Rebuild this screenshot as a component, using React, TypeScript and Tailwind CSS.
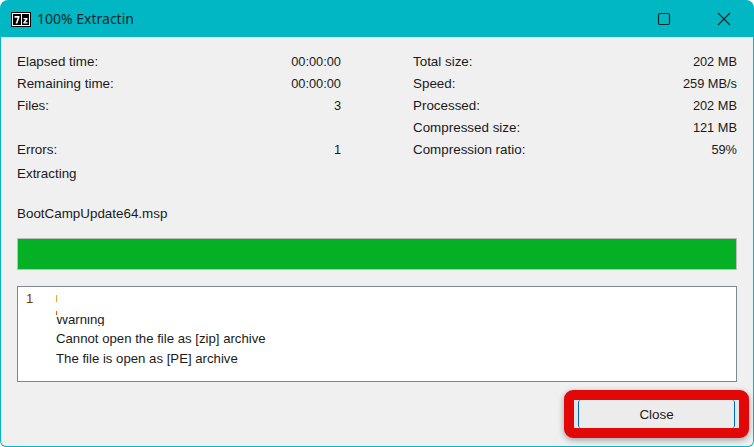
const leftRows = [
  { label: "Elapsed time:", value: "00:00:00" },
  { label: "Remaining time:", value: "00:00:00" },
  { label: "Files:", value: "3" },
  { label: "", value: "" },
  { label: "Errors:", value: "1" },
];

const rightRows = [
  { label: "Total size:", value: "202 MB" },
  { label: "Speed:", value: "259 MB/s" },
  { label: "Processed:", value: "202 MB" },
  { label: "Compressed size:", value: "121 MB" },
  { label: "Compression ratio:", value: "59%" },
];

function StatColumn({ rows }: { rows: { label: string; value: string }[] }) {
  return (
    <div className="w-[324px] flex flex-col">
      {rows.map((row, i) => (
        <div key={i} className="h-[22px] flex items-center justify-between">
          <span>{row.label}</span>
          <span className="text-[12.8px]">{row.value}</span>
        </div>
      ))}
    </div>
  );
}

function SevenZipLogo() {
  return (
    <svg width="20" height="15" viewBox="0 0 20 15" className="shrink-0">
      <rect x="0.5" y="0.5" width="19" height="14" fill="#fff" stroke="#000" />
      <rect x="2" y="2" width="8" height="11" fill="#000" />
      <rect x="11" y="2" width="7" height="11" fill="#000" />
      <path d="M3.5 4h5v1.6L6.3 11.5H4.6L6.6 5.7H3.5z" fill="#fff" />
      <path d="M12.5 6h4v1.3l-2.3 3h2.4v1.2h-4.3v-1.2l2.4-3h-2.2z" fill="#fff" />
    </svg>
  );
}

export default function App() {
  return (
    <div className="w-[754px] h-[447px] bg-white overflow-hidden text-[13.4px] leading-none text-[#1a1a1a] font-['Liberation_Sans',sans-serif]">
      <div className="w-full h-full flex flex-col bg-[#00b7c3] rounded-t-[8px] rounded-b-[6px] pl-[1px] pr-[1px] pb-[1px]">
        {/* TITLE BAR */}
        <div className="h-[37px] shrink-0 flex items-center">
          <div className="ml-[10px] mr-[6px] mt-[1px]">
            <SevenZipLogo />
          </div>
          <span className="text-[14px] mt-[1px] text-[#0b2a30] font-['Noto_Sans',sans-serif]">100% Extractin</span>
          <div className="ml-auto flex items-center">
            <svg width="14" height="14" viewBox="0 0 14 14" className="mr-[46px]">
              <rect x="1.5" y="1.5" width="11" height="11" rx="1.5" fill="none" stroke="#06262b" strokeWidth="1.2" />
            </svg>
            <svg width="14" height="14" viewBox="0 0 14 14" className="mr-[22px]">
              <path d="M1 1l12 12M13 1L1 13" fill="none" stroke="#06262b" strokeWidth="1.1" />
            </svg>
          </div>
        </div>

        {/* BODY */}
        <div className="flex-1 bg-[#f0f0f0] rounded-b-[5px] flex flex-col pl-[16px] pr-[16px] pt-[14px]">
          <div className="flex justify-between">
            <StatColumn rows={leftRows} />
            <StatColumn rows={rightRows} />
          </div>
          <div className="mt-[2px] h-[22px] flex items-center">Extracting</div>
          <div className="mt-[18px] h-[22px] flex items-center">BootCampUpdate64.msp</div>

          <div className="mt-[13px] h-[32px] border border-[#bcbcbc] bg-[#06b025]" />

          <div className="mt-[16px] h-[96px] border border-[#82878f] bg-white pl-[8px] pt-[2px] flex flex-col text-[13.2px]">
            <div className="h-[19px] flex items-center text-[#7a3a00]">
              <span className="w-[30px]">1</span>
              <span className="w-[1px] h-[7px] bg-[#f5a623]" />
            </div>
            <div className="ml-[30px] h-[20px] flex flex-col justify-end overflow-hidden relative">
              <span className="absolute left-0 top-[3px] w-[1px] h-[4px] bg-[#e8590c]" />
              <span className="h-[9px] mb-[2px] overflow-hidden flex items-end">
                <span className="block">Warning</span>
              </span>
            </div>
            <div className="ml-[30px] h-[21px] flex items-center">Cannot open the file as [zip] archive</div>
            <div className="ml-[30px] h-[19px] flex items-center">The file is open as [PE] archive</div>
          </div>

          {/* FOOTER */}
          <div className="flex justify-end mt-[8px] mr-[-12px]">
            <div className="w-[185px] h-[48px] border-[10px] border-[#e20808] rounded-[9px] shadow-[0_2px_6px_rgba(0,0,0,0.35)] bg-[#e6e6e6] px-[4px]">
              <button className="w-full h-full pt-[1px] bg-[#ececec] border-x border-[#0067c0] rounded-[3px] text-[#1a1a1a]">
                Close
              </button>
            </div>
          </div>
        </div>
      </div>
    </div>
  );
}
